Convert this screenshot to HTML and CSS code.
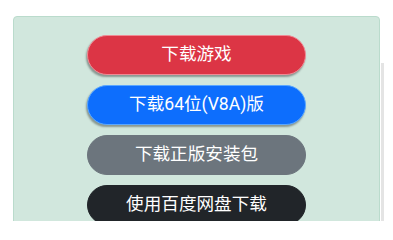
FILE: index.html
```html
<!DOCTYPE html>
<html lang="zh-CN">
<head>
<meta charset="utf-8">
<link rel="stylesheet" href="styles.css">
</head>
<body>
<div class="page">
  <div class="panel">
    <a class="btn btn-red">下载游戏</a>
    <a class="btn btn-blue">下载64位(V8A)版</a>
    <a class="btn btn-gray">下载正版安装包</a>
    <a class="btn btn-dark">使用百度网盘下载</a>
  </div>
  <div class="track"></div>
</div>
</body>
</html>
```
FILE: styles.css
```css
html, body {
  margin: 0;
  padding: 0;
  background: #ffffff;
}
.page {
  display: flex;
  align-items: flex-start;
  padding: 16px 0 0 13px;
  height: 221px;
  box-sizing: border-box;
  overflow: hidden;
}
.panel {
  width: 367px;
  box-sizing: border-box;
  height: 230px;
  flex-shrink: 0;
  background: #d1e7dd;
  border: 1px solid #badbcc;
  border-radius: 4px;
  padding-top: 18px;
  display: flex;
  flex-direction: column;
  align-items: center;
  gap: 10px;
}
.track {
  width: 3px;
  flex-shrink: 0;
  margin-left: 1px;
  margin-top: 47px;
  height: 200px;
  background: #e4e4e4;
}
.btn {
  width: 219px;
  height: 40px;
  box-sizing: border-box;
  border-radius: 20px;
  display: flex;
  align-items: center;
  justify-content: center;
  color: #ffffff;
  font-family: Roboto, "Noto Sans CJK SC", sans-serif;
  font-size: 17.6px;
  line-height: 1;
  text-decoration: none;
  box-shadow: -1px 2px 2px rgba(0, 0, 0, 0.35);
  flex-shrink: 0;
}
.btn-red { background: #dc3545; border: 1px solid #f08a94; }
.btn-blue { background: #0d6efd; border: 1px solid #5aa7ff; }
.btn-gray { background: #6c757d; border: 1px solid #6c757d; box-shadow: none; }
.btn-dark { background: #212529; border: 1px solid #212529; box-shadow: none; }
```
